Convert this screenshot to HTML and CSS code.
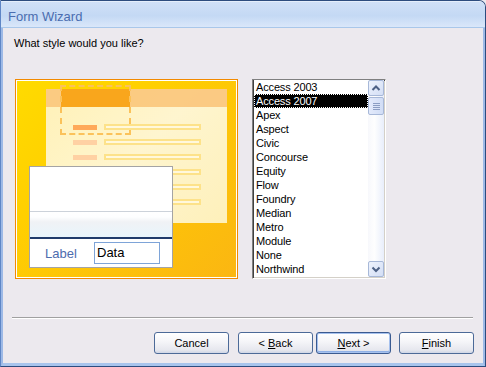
FILE: index.html
```html
<!DOCTYPE html>
<html>
<head>
<meta charset="utf-8">
<link rel="stylesheet" href="styles.css">
</head>
<body>
<div class="window">
  <div class="titlebar">Form Wizard</div>
  <div class="content">
    <div class="question">What style would you like?</div>
    <div class="main">
      <div class="preview">
        <div class="panel">
          <div class="panel-head"></div>
        </div>
        <div class="head-dark"></div>
        <div class="dashed"></div>
        <div class="lbl lbl-dark" style="top:45px"></div>
        <div class="lbl" style="top:60px"></div>
        <div class="lbl" style="top:75px"></div>
        <div class="fld" style="top:44px"></div>
        <div class="fld" style="top:59px"></div>
        <div class="fld" style="top:74px"></div>
        <div class="fld" style="top:89px"></div>
        <div class="fld" style="top:104px"></div>
        <div class="fld" style="top:119px"></div>
        <div class="card">
          <div class="card-top"></div>
          <div class="card-band"></div>
          <div class="card-row">
            <span class="card-label">Label</span>
            <span class="card-data">Data</span>
          </div>
        </div>
      </div>
      <div class="listbox">
        <div class="items">
          <div class="item">Access 2003</div>
          <div class="item selected">Access 2007</div>
          <div class="item">Apex</div>
          <div class="item">Aspect</div>
          <div class="item">Civic</div>
          <div class="item">Concourse</div>
          <div class="item">Equity</div>
          <div class="item">Flow</div>
          <div class="item">Foundry</div>
          <div class="item">Median</div>
          <div class="item">Metro</div>
          <div class="item">Module</div>
          <div class="item">None</div>
          <div class="item">Northwind</div>
        </div>
        <div class="scrollbar">
          <div class="sb-btn">
            <svg width="14" height="14" viewBox="0 0 14 14"><polyline points="3.5,9 7,5.5 10.5,9" fill="none" stroke="#4d6185" stroke-width="2"/></svg>
          </div>
          <div class="sb-thumb">
            <span></span><span></span><span></span><span></span>
          </div>
          <div class="sb-track"></div>
          <div class="sb-btn">
            <svg width="14" height="14" viewBox="0 0 14 14"><polyline points="3.5,5.5 7,9 10.5,5.5" fill="none" stroke="#4d6185" stroke-width="2"/></svg>
          </div>
        </div>
      </div>
    </div>
    <div class="separator"></div>
    <div class="buttons">
      <div class="btn">Cancel</div>
      <div class="btn gap-back">&lt; <u>B</u>ack</div>
      <div class="btn btn-default gap-next"><u>N</u>ext &gt;</div>
      <div class="btn gap-finish"><u>F</u>inish</div>
    </div>
  </div>
</div>
</body>
</html>
```

FILE: styles.css
```css
html, body {
  margin: 0;
  padding: 0;
  background: #ece9ee;
}
body {
  width: 486px;
  height: 367px;
  overflow: hidden;
  font-family: "Liberation Sans", Arial, sans-serif;
}
.window {
  box-sizing: border-box;
  width: 486px;
  height: 367px;
  border: 1px solid #2c4c7e;
  border-left-color: #5f86c6;
  border-radius: 0 7px 0 0;
  overflow: hidden;
  display: flex;
  flex-direction: column;
  background: #ece9ee;
}
.titlebar {
  box-sizing: border-box;
  height: 27px;
  padding: 3px 0 0 7px;
  line-height: 23px;
  font-size: 13px;
  color: #4a6db0;
  border-bottom: 1px solid #a9c7ea;
  border-top: 1px solid #e4eefb;
  background: linear-gradient(#cfe0f7, #c4d9f4 55%, #dae7fa);
}
.content {
  flex: 1;
  box-sizing: border-box;
  border-left: 2px solid #9db9e6;
  border-right: 2px solid #9db9e6;
  border-bottom: 3px solid #a8c4ec;
  padding: 9px 9px 0 9px;
  display: flex;
  flex-direction: column;
}
.question {
  margin-left: 2px;
  font-size: 11px;
  line-height: 13px;
  color: #000;
}
.main {
  margin-top: 29px;
  margin-left: 3px;
  height: 200px;
  display: flex;
}
.preview {
  position: relative;
  box-sizing: border-box;
  width: 223px;
  height: 200px;
  border: 1px solid #f28a00;
  box-shadow: inset 0 0 0 1px #fff;
  background: linear-gradient(135deg, #ffdb00 0%, #ffcf00 35%, #fdc10a 70%, #fbb612 100%);
  overflow: hidden;
}
.panel {
  position: absolute;
  left: 30px;
  top: 9px;
  width: 181px;
  height: 134px;
  background: linear-gradient(135deg, #fff3c2 0%, #fff8da 50%, #fff3c4 100%);
  opacity: 0.95;
}
.panel-head {
  height: 18px;
  background: #fbcb8a;
}
.head-dark {
  position: absolute;
  left: 45px;
  top: 9px;
  width: 69px;
  height: 18px;
  background: #f9a61c;
}
.dashed {
  position: absolute;
  left: 44px;
  top: 5px;
  width: 67px;
  height: 46px;
  border: 2px dashed #fbc25a;
}
.lbl {
  position: absolute;
  left: 57px;
  width: 24px;
  height: 5px;
  background: #ffd1a3;
}
.lbl-dark {
  background: #ffa95a;
}
.fld {
  position: absolute;
  left: 88px;
  width: 93px;
  height: 2px;
  border: 2px solid #fde28a;
  background: #fff8dc;
}
.card {
  position: absolute;
  left: 13px;
  top: 86px;
  box-sizing: border-box;
  width: 144px;
  height: 102px;
  border: 1px solid #a4a4a4;
  background: #fff;
  display: flex;
  flex-direction: column;
}
.card-top {
  height: 44px;
  border-bottom: 1px solid #ccd2da;
}
.card-band {
  height: 25px;
  background: linear-gradient(#ffffff 0%, #fdfeff 20%, #f0f2f5 40%, #e8f5fc 100%);
  border-bottom: 2px solid #1f3b6b;
}
.card-row {
  display: flex;
  align-items: center;
  height: 28px;
  padding-left: 15px;
}
.card-label {
  font-size: 13px;
  color: #4d6cae;
  width: 49px;
}
.card-data {
  box-sizing: border-box;
  width: 66px;
  height: 22px;
  border: 1px solid #7ea4d8;
  font-size: 13px;
  line-height: 20px;
  padding-left: 2px;
  color: #000;
}
.listbox {
  box-sizing: border-box;
  margin-left: 14px;
  width: 134px;
  height: 200px;
  border: 1px solid;
  border-color: #7f7f7f #ffffff #ffffff #7f7f7f;
  box-shadow: inset 1px 1px 0 #404040, inset -1px -1px 0 #d4d0c8;
  padding: 0 1px 1px 1px;
  background: #fff;
  display: flex;
}
.items {
  flex: 1;
  background: #fff;
}
.item {
  height: 14px;
  line-height: 14px;
  font-size: 11px;
  letter-spacing: -0.15px;
  padding-left: 2px;
  color: #000;
  white-space: nowrap;
}
.item.selected {
  background: #000;
  color: #fff;
  outline: 1px dotted #fff;
  outline-offset: -1px;
}
.scrollbar {
  width: 16px;
  display: flex;
  flex-direction: column;
  background: linear-gradient(to right, #f7f8fc, #fefefe 40%, #e8eefb);
}
.sb-btn {
  box-sizing: border-box;
  width: 16px;
  height: 16px;
  border: 1px solid #a7b8d8;
  border-radius: 2px;
  background: linear-gradient(135deg, #eef3fd, #d3def5);
  display: flex;
  align-items: center;
  justify-content: center;
}
.sb-thumb {
  box-sizing: border-box;
  width: 16px;
  height: 18px;
  margin-top: 1px;
  border: 1px solid #a7b8d8;
  border-radius: 2px;
  background: linear-gradient(to right, #e3eafb, #d1ddf6);
  display: flex;
  flex-direction: column;
  align-items: center;
  justify-content: center;
  gap: 1px;
}
.sb-thumb span {
  display: block;
  width: 7px;
  height: 1px;
  background: #8b9dc3;
}
.sb-track {
  flex: 1;
}
.separator {
  margin-top: 38px;
  width: 461px;
  height: 1px;
  background: #a0a0a0;
  border-bottom: 1px solid #ffffff;
}
.buttons {
  margin-top: 13px;
  display: flex;
  justify-content: flex-end;
}
.btn {
  box-sizing: border-box;
  width: 75px;
  height: 22px;
  border: 1px solid #4c6a98;
  border-radius: 3px;
  background: linear-gradient(#ffffff 0%, #f6f6f9 40%, #e6e7ee 85%, #cfd6e6 100%);
  font-size: 11px;
  line-height: 20px;
  text-align: center;
  color: #000;
}
.btn u {
  text-decoration: underline;
}
.gap-back {
  margin-left: 9px;
}
.gap-next {
  margin-left: 3px;
}
.gap-finish {
  margin-left: 8px;
}
.btn-default {
  border-color: #3a5a90;
  box-shadow: inset 0 0 0 1px #a6c1ee, inset 0 -1px 0 1px #8fb0e6;
}
```
